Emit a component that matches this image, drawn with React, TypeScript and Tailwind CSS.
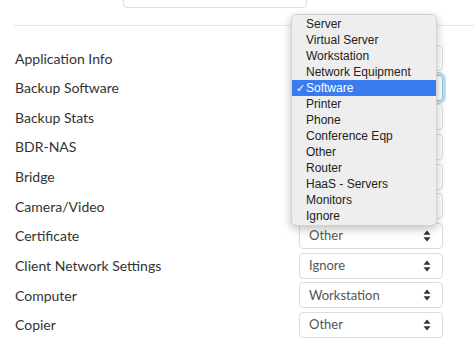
import React from "react";

const rows: { label: string; value: string }[] = [
  { label: "Application Info", value: "Software" },
  { label: "Backup Software", value: "Software" },
  { label: "Backup Stats", value: "Software" },
  { label: "BDR-NAS", value: "Server" },
  { label: "Bridge", value: "Network Equipment" },
  { label: "Camera/Video", value: "Other" },
  { label: "Certificate", value: "Other" },
  { label: "Client Network Settings", value: "Ignore" },
  { label: "Computer", value: "Workstation" },
  { label: "Copier", value: "Other" },
];

const options = [
  "Server",
  "Virtual Server",
  "Workstation",
  "Network Equipment",
  "Software",
  "Printer",
  "Phone",
  "Conference Eqp",
  "Other",
  "Router",
  "HaaS - Servers",
  "Monitors",
  "Ignore",
];

const SortIcon = () => (
  <svg width="8" height="12" viewBox="0 0 8 12" className="text-[#333]">
    <path d="M4 0.5 L7.5 4.8 H0.5 Z" fill="currentColor" />
    <path d="M4 11.5 L7.5 7.2 H0.5 Z" fill="currentColor" />
  </svg>
);

// rows under the open menu keep their box but show no value
const SelectBox = ({ value, focused, hidden }: { value: string; focused?: boolean; hidden?: boolean }) => (
  <div
    className={`w-[144px] h-[26px] rounded-[4px] border bg-white flex items-center justify-between pl-[9px] pr-[11px] text-[13px] text-[#555] ${
      focused ? "border-[#8ec5e6] ring-[3px] ring-[#bfe0f2]" : "border-[#dcdcdc]"
    }`}
  >
    <span>{hidden ? "" : value}</span>
    <SortIcon />
  </div>
);

export default function App() {
  return (
    <div
      className="relative w-[474px] h-[339px] overflow-hidden bg-white"
      style={{ fontFamily: "Lato, 'Noto Sans', sans-serif" }}
    >
      <div className="ml-[123px] mt-[-22px] w-[184px] h-[30px] rounded-[4px] border border-[#dedede] bg-white" />
      <div className="ml-[14px] mt-[17px] border-t border-[#e6e6e6]" />
      <div className="mt-[19px] flex flex-col gap-[3.67px]">
        {rows.map((r, i) => (
          <div key={r.label} className="flex items-center h-[26px] pl-[15px]">
            <div className="w-[284px] text-[14px] text-[#333]">{r.label}</div>
            <SelectBox value={r.value} focused={i === 1} hidden={i < 6} />
          </div>
        ))}
      </div>

      <div
        className="absolute left-[291px] top-[14px] w-[146px] h-[212px] rounded-[5px] bg-[#eeeeee] border border-[#d2d2d2] shadow-[0_3px_10px_rgba(0,0,0,0.25)] pt-[1px]"
        style={{ fontFamily: "'Liberation Sans', Arial, sans-serif" }}
      >
        {options.map((o) => {
          const sel = o === "Software";
          return (
            <div
              key={o}
              className={`relative h-[16px] leading-[16px] pl-[14px] text-[12px] ${
                sel ? "bg-[#3a7cf0] text-white" : "text-[#222]"
              }`}
            >
              {sel && <span className="absolute left-[4px] top-0 text-[11px]">✓</span>}
              {o}
            </div>
          );
        })}
      </div>
    </div>
  );
}
